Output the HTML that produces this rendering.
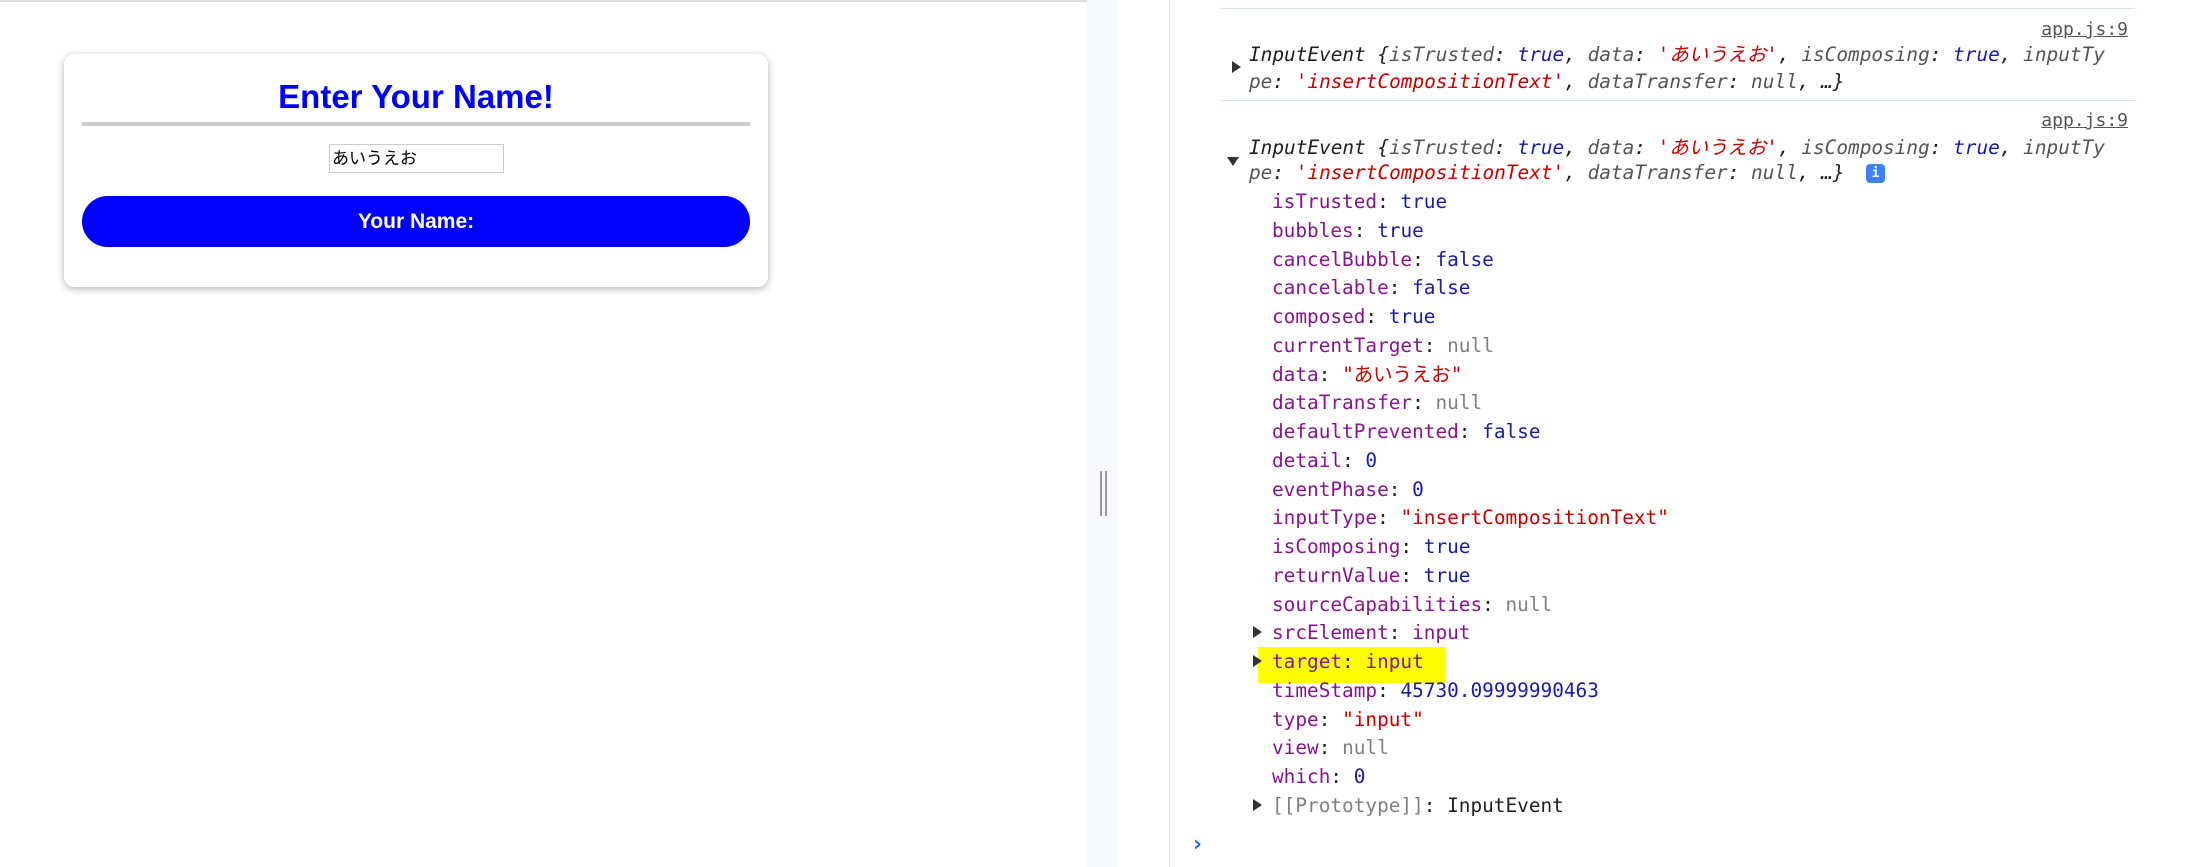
<!DOCTYPE html>
<html><head><meta charset="utf-8"><style>
*{margin:0;padding:0;box-sizing:border-box}
body{width:2185px;height:867px;position:relative;background:#fff;overflow:hidden;font-family:"DejaVu Sans Mono","Noto Sans CJK JP",monospace}
.abs{position:absolute}
.card{left:64px;top:54px;width:704px;height:233px;border-radius:10px;box-shadow:0 2px 8px rgba(0,0,0,.3);background:#fff}
.title{left:64px;width:704px;top:76px;text-align:center;font:bold 33px "Liberation Sans",sans-serif;color:#00f;line-height:42px}
.hr{left:82px;width:668px;top:122px;height:4px;background:#ccc}
.inp{left:329px;top:144px;width:175px;height:29px;border:1px solid #ccc;font:17px "Liberation Sans","Noto Sans CJK JP",sans-serif;line-height:27px;padding-left:2px;color:#000}
.btn{left:82px;top:196px;width:668px;height:51px;border-radius:26px;background:#00f;color:#fff;text-align:center;font:bold 21px "Liberation Sans",sans-serif;line-height:51px}
.t{font-size:19.4px;line-height:28px;white-space:pre;color:#1f1f1f}
.i{font-style:italic}
.k{color:#881391}.b{color:#1a1aa6}.s{color:#c80000}.n{color:#808080}.g{color:#555}
.tri{width:0;height:0;border-top:6px solid transparent;border-bottom:6px solid transparent;border-left:9px solid #333}
.trd{width:0;height:0;border-left:6px solid transparent;border-right:6px solid transparent;border-top:9px solid #333}
.link{font-size:18px;color:#555;text-decoration:underline;right:57px;white-space:pre}
</style></head><body>
<div class="abs" style="left:0;top:0;width:1087px;height:2px;background:#ddd"></div>
<div class="abs card"></div>
<div class="abs title">Enter Your Name!</div>
<div class="abs hr"></div>
<div class="abs inp">あいうえお</div>
<div class="abs btn">Your Name:</div>

<div class="abs" style="left:1087px;top:0;width:32px;height:867px;background:#f8f9fc"></div>
<div class="abs" style="left:1100px;top:471px;width:2px;height:45px;background:#999"></div>
<div class="abs" style="left:1105px;top:471px;width:2px;height:45px;background:#999"></div>
<div class="abs" style="left:1169px;top:0;width:1px;height:867px;background:#e3e8f0"></div>
<div class="abs" style="left:1221px;top:8px;width:914px;height:1px;background:#d3e3fd"></div>
<div class="abs" style="left:1221px;top:100px;width:914px;height:1px;background:#d3e3fd"></div>

<div class="abs link" style="top:19px">app.js:9</div>
<div class="abs tri" style="left:1232px;top:61px"></div>
<div class="abs t i" style="left:1249px;top:41px">InputEvent {<span class="g">isTrusted</span>: <span class="b">true</span>, <span class="g">data</span>: <span class="s">'あいうえお'</span>, <span class="g">isComposing</span>: <span class="b">true</span>, <span class="g">inputTy</span></div>
<div class="abs t i" style="left:1249px;top:68px"><span class="g">pe</span>: <span class="s">'insertCompositionText'</span>, <span class="g">dataTransfer</span>: <span class="g">null</span>, …}</div>

<div class="abs link" style="top:110px">app.js:9</div>
<div class="abs trd" style="left:1227px;top:157px"></div>
<div class="abs t i" style="left:1249px;top:134px">InputEvent {<span class="g">isTrusted</span>: <span class="b">true</span>, <span class="g">data</span>: <span class="s">'あいうえお'</span>, <span class="g">isComposing</span>: <span class="b">true</span>, <span class="g">inputTy</span></div>
<div class="abs t i" style="left:1249px;top:159px"><span class="g">pe</span>: <span class="s">'insertCompositionText'</span>, <span class="g">dataTransfer</span>: <span class="g">null</span>, …}</div>
<div class="abs" style="left:1866px;top:164px;width:19px;height:19px;border-radius:4px;background:#3b82f6;color:#fff;font:bold 13px 'DejaVu Sans Mono',monospace;text-align:center;line-height:19px">i</div>

<div class="abs" style="left:1258px;top:647px;width:188px;height:36px;background:#ff0"></div>

<div class="abs t" style="left:1272px;top:188px;line-height:28.75px"><span class="k">isTrusted</span>: <span class="b">true</span>
<span class="k">bubbles</span>: <span class="b">true</span>
<span class="k">cancelBubble</span>: <span class="b">false</span>
<span class="k">cancelable</span>: <span class="b">false</span>
<span class="k">composed</span>: <span class="b">true</span>
<span class="k">currentTarget</span>: <span class="n">null</span>
<span class="k">data</span>: <span class="s">"あいうえお"</span>
<span class="k">dataTransfer</span>: <span class="n">null</span>
<span class="k">defaultPrevented</span>: <span class="b">false</span>
<span class="k">detail</span>: <span class="b">0</span>
<span class="k">eventPhase</span>: <span class="b">0</span>
<span class="k">inputType</span>: <span class="s">"insertCompositionText"</span>
<span class="k">isComposing</span>: <span class="b">true</span>
<span class="k">returnValue</span>: <span class="b">true</span>
<span class="k">sourceCapabilities</span>: <span class="n">null</span>
<span class="k">srcElement</span>: <span class="k">input</span>
<span class="k">target</span>: <span class="k">input</span>
<span class="k">timeStamp</span>: <span class="b">45730.09999990463</span>
<span class="k">type</span>: <span class="s">"input"</span>
<span class="k">view</span>: <span class="n">null</span>
<span class="k">which</span>: <span class="b">0</span>
<span class="n">[[Prototype]]</span>: InputEvent</div>
<div class="abs tri" style="left:1253px;top:626px"></div>
<div class="abs tri" style="left:1253px;top:655px"></div>
<div class="abs tri" style="left:1253px;top:799px"></div>
<div class="abs" style="left:1193px;top:832px;color:#1a73e8;font:bold 22px 'DejaVu Sans',sans-serif">›</div>
</body></html>
